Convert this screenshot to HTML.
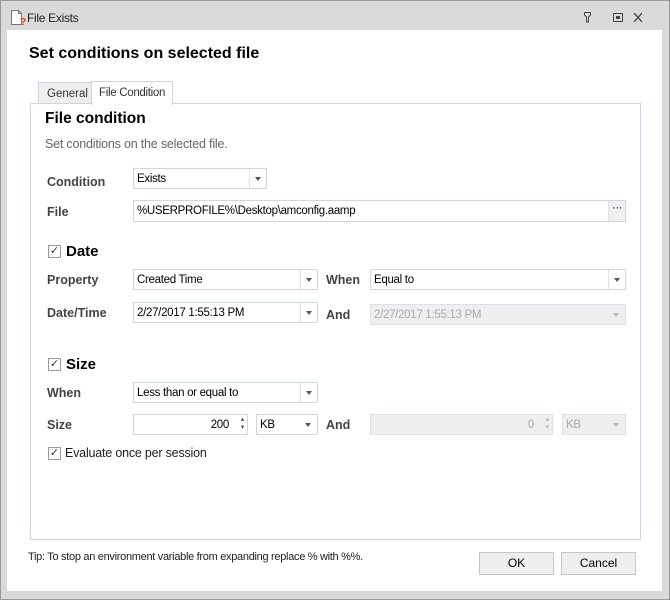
<!DOCTYPE html>
<html><head><style>
*{box-sizing:border-box;margin:0;padding:0}
body{width:670px;height:600px;background:#dadada;font-family:"Liberation Sans",sans-serif;font-size:12px;color:#000;position:relative;overflow:hidden}
.a{position:absolute}
.win{left:0;top:0;width:670px;height:600px;border:1px solid #9a9a9a}
.content{left:7px;top:30px;width:655px;height:561px;background:#fff}
.panel{left:30px;top:103px;width:611px;height:437px;border:1px solid #cdd6df;background:#fff}
.lbl{font-weight:bold;color:#444;font-size:12.5px}
.box{border:1px solid #cfd6dd;background:#fff;height:21px;padding:4px 3px 0;font-size:11.5px;letter-spacing:-0.3px;white-space:nowrap;overflow:hidden}
.dd{position:absolute;right:0;top:0;width:17px;height:19px;border-left:1px solid #dfe3e7}
.dd:after{content:"";position:absolute;left:5px;top:8px;border-left:3.5px solid transparent;border-right:3.5px solid transparent;border-top:4px solid #555}
.dis{background:#efefef;color:#aaa;border-color:#dde1e5}
.dis .dd:after{border-top-color:#bbb}
.cb{width:13px;height:13px;border:1px solid #999;background:#fff;font-size:11px;line-height:11px;text-align:center;color:#333}
.btn{border:1px solid #c6c6c6;background:#efefef;height:23px;text-align:center;line-height:21px;font-size:12px}
</style></head><body>
<div class="a win"></div>
<svg class="a" style="left:10px;top:9px" width="16" height="17" viewBox="0 0 16 17"><path d="M1.5 1.5h7l3 3v11h-10z" fill="#fff" stroke="#777"/><path d="M8.5 1.5v3h3" fill="none" stroke="#777"/><text x="10" y="16" font-size="10" font-weight="bold" fill="#d04a1a" font-family="Liberation Sans">?</text></svg>
<div class="a" style="left:27px;top:11px;font-size:12px;color:#222;letter-spacing:-0.3px">File Exists</div>
<svg class="a" style="left:582px;top:11px" width="60" height="14" viewBox="0 0 60 14"><path d="M2.5 1.5h6v2.5l-2 2v5h-2v-5l-2-2z" fill="none" stroke="#444"/><rect x="31.5" y="2.5" width="9" height="8" fill="none" stroke="#444"/><rect x="34" y="5" width="4" height="3" fill="#444"/><path d="M52 2l8 9M60 2l-8 9" stroke="#444" stroke-width="1.3"/></svg>
<div class="a content"></div>
<div class="a" style="left:29px;top:45px;font-size:16px;font-weight:bold">Set conditions on selected file</div>
<div class="a" style="left:38px;top:82px;width:54px;height:22px;border:1px solid #cdd6df;background:#eee;font-size:11.5px;padding:5px 0 0 8px;color:#333">General</div>
<div class="a panel"></div>
<div class="a" style="left:91px;top:81px;width:82px;height:24px;border:1px solid #cdd6df;border-bottom:none;background:#fff;font-size:11.5px;padding:5px 0 0 7px;color:#333;letter-spacing:-0.3px">File Condition</div>
<div class="a" style="left:45px;top:110px;font-size:15.5px;font-weight:bold">File condition</div>
<div class="a" style="left:45px;top:137px;font-size:12.5px;color:#666;letter-spacing:-0.2px">Set conditions on the selected file.</div>

<div class="a lbl" style="left:47px;top:175px">Condition</div>
<div class="a box" style="left:133px;top:168px;width:134px">Exists<div class="dd"></div></div>
<div class="a lbl" style="left:47px;top:205px">File</div>
<div class="a box" style="left:133px;top:200px;width:493px;height:22px">%USERPROFILE%\Desktop\amconfig.aamp<div class="a" style="right:0;top:0;width:17px;height:20px;border-left:1px solid #dfe3e7;background:#f0f0f0;text-align:center;line-height:14px;font-size:11px">···</div></div>

<div class="a cb" style="left:48px;top:245px">✓</div>
<div class="a" style="left:66px;top:243px;font-size:15px;font-weight:bold">Date</div>
<div class="a lbl" style="left:47px;top:273px">Property</div>
<div class="a box" style="left:133px;top:269px;width:185px">Created Time<div class="dd"></div></div>
<div class="a lbl" style="left:326px;top:273px">When</div>
<div class="a box" style="left:370px;top:269px;width:256px">Equal to<div class="dd"></div></div>
<div class="a lbl" style="left:47px;top:306px">Date/Time</div>
<div class="a box" style="left:133px;top:302px;width:185px">2/27/2017 1:55:13 PM<div class="dd"></div></div>
<div class="a lbl" style="left:326px;top:308px">And</div>
<div class="a box dis" style="left:370px;top:304px;width:256px">2/27/2017 1:55:13 PM<div class="dd" style="border:none"></div></div>

<div class="a cb" style="left:48px;top:358px">✓</div>
<div class="a" style="left:66px;top:356px;font-size:15px;font-weight:bold">Size</div>
<div class="a lbl" style="left:47px;top:386px">When</div>
<div class="a box" style="left:133px;top:382px;width:185px">Less than or equal to<div class="dd"></div></div>
<div class="a lbl" style="left:47px;top:418px">Size</div>
<div class="a box" style="left:133px;top:414px;width:115px;text-align:right;padding-right:18px">200<div class="a" style="right:3px;top:1px;font-size:7px;line-height:8px;color:#555">▴<br>▾</div></div>
<div class="a box" style="left:256px;top:414px;width:62px">KB<div class="dd" style="border:none"></div></div>
<div class="a lbl" style="left:326px;top:418px">And</div>
<div class="a box dis" style="left:370px;top:414px;width:183px;text-align:right;padding-right:18px">0<div class="a" style="right:3px;top:1px;font-size:7px;line-height:8px;color:#bbb">▴<br>▾</div></div>
<div class="a box dis" style="left:562px;top:414px;width:64px">KB<div class="dd" style="border:none"></div></div>

<div class="a cb" style="left:48px;top:447px">✓</div>
<div class="a" style="left:65px;top:446px;font-size:12.5px;color:#222;letter-spacing:-0.2px">Evaluate once per session</div>

<div class="a" style="left:28px;top:551px;font-size:11px;color:#222;letter-spacing:-0.3px">Tip: To stop an environment variable from expanding replace % with %%.</div>
<div class="a btn" style="left:479px;top:552px;width:75px">OK</div>
<div class="a btn" style="left:561px;top:552px;width:75px">Cancel</div>
</body></html>
